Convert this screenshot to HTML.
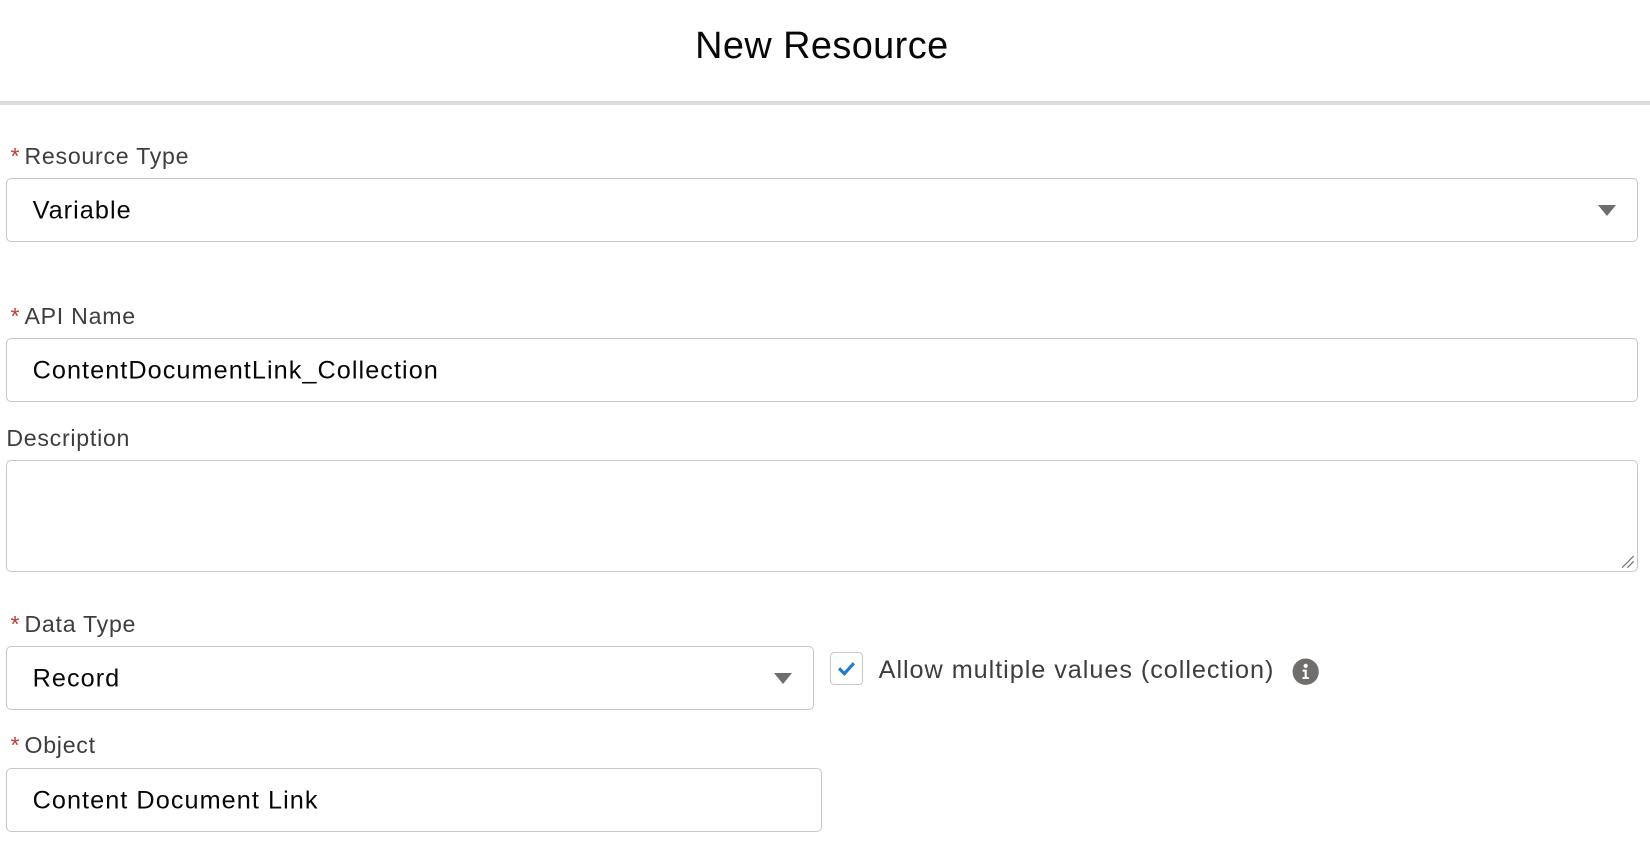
<!DOCTYPE html>
<html><head><meta charset="utf-8"><style>
html,body{margin:0;padding:0;background:#fff;overflow:hidden}
body{width:1568px;height:800px;zoom:1.05230;position:relative;font-family:"Liberation Sans",sans-serif;color:#181818}
.a{position:absolute}
.title{left:0;width:1562px;text-align:center;top:24px;font-size:36px;letter-spacing:0.4px;color:#080707}
.line{left:0;width:1568px;top:96px;height:4px;background:#dddbda}
.lab{font-size:22px;letter-spacing:0.7px;color:#3e3e3c;left:6px}
.lab b{color:#c23934;font-weight:normal;margin-right:4px;margin-left:4px}
.box{border:1.5px solid #c9c7c5;border-radius:5px;box-sizing:border-box;background:#fff}
.val{font-size:24px;letter-spacing:1px;color:#080707;position:absolute;left:24px;top:50%;transform:translateY(-46%);white-space:nowrap}
.tri{position:absolute;width:0;height:0;border-left:9px solid transparent;border-right:9px solid transparent;border-top:11px solid #706e6b}
</style></head><body>
<div class="a title">New Resource</div>
<div class="a line"></div>

<div class="a lab" style="top:136px"><b>*</b>Resource Type</div>
<div class="a box" style="left:6px;top:169px;width:1551px;height:61px"><span class="val">Variable</span><div class="tri" style="left:1512px;top:25px"></div></div>

<div class="a lab" style="top:288px"><b>*</b>API Name</div>
<div class="a box" style="left:6px;top:321px;width:1551px;height:61px"><span class="val">ContentDocumentLink_Collection</span></div>

<div class="a lab" style="top:404px">Description</div>
<div class="a box" style="left:6px;top:437px;width:1551px;height:107px">
<svg class="a" style="right:3px;bottom:3px" width="14" height="14"><path d="M2 13L13 2M7 13L13 7" stroke="#777" stroke-width="1.2"/></svg></div>

<div class="a lab" style="top:581px"><b>*</b>Data Type</div>
<div class="a box" style="left:6px;top:614px;width:768px;height:61px"><span class="val">Record</span><div class="tri" style="left:729px;top:25px"></div></div>

<div class="a box" style="left:789px;top:620px;width:31px;height:31px;border-radius:4px">
<svg class="a" style="left:5px;top:6px" width="18" height="16"><path d="M2 8L7 13L16 3" stroke="#1b7bd6" stroke-width="3" fill="none"/></svg></div>
<div class="a" style="left:835px;top:623px;font-size:24px;letter-spacing:0.9px;color:#3e3e3c">Allow multiple values (collection)</div>
<svg class="a" style="left:1228px;top:625px" width="26" height="26"><circle cx="13" cy="13" r="12.5" fill="#706e6b"/><circle cx="13" cy="7.5" r="2" fill="#fff"/><path d="M10 11h4v7h2v2h-6v-2h2v-5h-2z" fill="#fff"/></svg>

<div class="a lab" style="top:696px"><b>*</b>Object</div>
<div class="a box" style="left:6px;top:730px;width:775px;height:61px"><span class="val">Content Document Link</span></div>
</body></html>
